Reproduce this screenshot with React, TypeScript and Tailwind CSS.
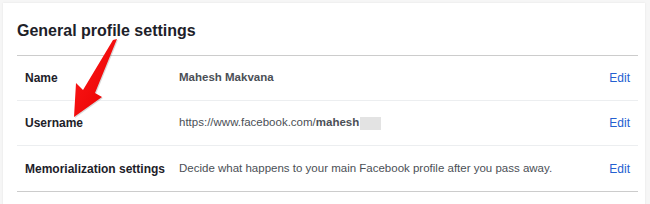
export default function App() {
  const rows = [
    { label: "Name", value: <span className="font-bold">Mahesh Makvana</span> },
    {
      label: "Username",
      value: (
        <span className="inline-flex items-center">
          https://www.facebook.com/<span className="font-bold">mahesh</span>
          <span className="ml-[1px] inline-block h-[13px] w-[21px] bg-[#e3e3e3] blur-[0.6px]" />
        </span>
      ),
    },
    {
      label: "Memorialization settings",
      value: "Decide what happens to your main Facebook profile after you pass away.",
    },
  ];

  return (
    <div
      className="relative h-[204px] w-[650px] overflow-hidden bg-[#f6f6f6] pl-[3px] pr-[5px] pt-[3px]"
      style={{ fontFamily: '"Liberation Sans", Arial, sans-serif' }}
    >
      <div className="h-[210px] bg-white pl-[14px] pr-[7px] shadow-[0_0_2px_rgba(0,0,0,0.08)]">
        <h2 className="pt-[17px] pb-[13px] text-[16px] leading-[22px] font-bold text-[#1d2129]">
          General profile settings
        </h2>
        <div className="border-t border-b border-[#cccccc]">
          {rows.map((r, i) => (
            <div
              key={r.label}
              className={`flex h-[45px] items-center pl-[8px] pr-[8px] ${
                i < rows.length - 1 ? "border-b border-[#eceef0]" : ""
              }`}
            >
              <div className="w-[154px] shrink-0 text-[12px] font-bold text-[#1d2129]">{r.label}</div>
              <div className="flex-1 text-[11.5px] text-[#4b4f56]">{r.value}</div>
              <a className="text-[12px] text-[#2460d0]" href="#">
                Edit
              </a>
            </div>
          ))}
        </div>
      </div>

      <svg
        className="absolute left-0 top-0"
        width="650"
        height="204"
        viewBox="0 0 650 204"
      >
        <defs>
          <linearGradient id="red" x1="0" y1="0" x2="1" y2="1">
            <stop offset="0" stopColor="#ff1a1a" />
            <stop offset="1" stopColor="#e60000" />
          </linearGradient>
        </defs>
        <polygon
          points="117,39 95,93 102,97 74,117 76,83 83,90 113,40"
          fill="#000"
          opacity="0.15"
          transform="translate(1,1)"
        />
        <polygon
          points="117,39 95,93 102,97 74,117 76,83 83,90 113,40"
          fill="url(#red)"
        />
      </svg>
    </div>
  );
}
